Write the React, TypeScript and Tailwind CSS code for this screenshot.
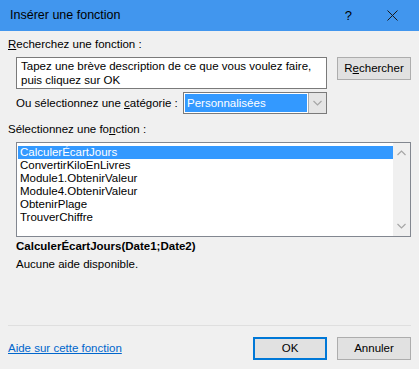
import React from "react";

const functions = [
  "CalculerÉcartJours",
  "ConvertirKiloEnLivres",
  "Module1.ObtenirValeur",
  "Module4.ObtenirValeur",
  "ObtenirPlage",
  "TrouverChiffre",
];

function Chevron({ up }: { up?: boolean }) {
  return (
    <svg width="9" height="6" viewBox="0 0 9 6">
      <path
        d={up ? "M0.5 5 L4.5 1 L8.5 5" : "M0.5 1 L4.5 5 L8.5 1"}
        fill="none"
        stroke="#a6a6a6"
        strokeWidth="1.2"
      />
    </svg>
  );
}

export default function App() {
  return (
    <div
      className="w-[419px] h-[369px] bg-[#f0f0f0] flex flex-col text-[11.5px] text-black overflow-hidden"
      style={{ fontFamily: '"Liberation Sans", Arial, sans-serif' }}
    >
      {/* barre de titre */}
      <div className="h-[31px] shrink-0 bg-[#4196ee] flex items-center pl-[10px]">
        <span className="leading-[15px] text-[12.5px]">Insérer une fonction</span>
        <span className="ml-auto mr-[35px] text-[13px]">?</span>
        <svg width="11" height="11" viewBox="0 0 11 11" className="mr-[21px]">
          <path d="M0.5 0.5 L10.5 10.5 M10.5 0.5 L0.5 10.5" stroke="#1a1a1a" strokeWidth="1" />
        </svg>
      </div>

      <div className="flex-1 flex flex-col px-[8px] pt-[6px] pb-[9px]">
        <div className="leading-[15px]">
          <span className="underline">R</span>echerchez une fonction :
        </div>

        <div className="flex items-start mt-[5px] ml-[8px]">
          <div className="w-[311px] h-[32px] bg-white border border-[#7a7a7a] px-[4px] pt-[1px] leading-[14px] whitespace-nowrap overflow-hidden">
            <div>Tapez une brève description de ce que vous voulez faire,</div>
            <div>puis cliquez sur OK</div>
          </div>
          <button className="ml-[10px] w-[74px] h-[23px] bg-[#e1e1e1] border border-[#adadad] leading-[15px]">
            R<span className="underline">e</span>chercher
          </button>
        </div>

        <div className="flex items-center mt-[3px] ml-[8px] h-[22px]">
          <span className="w-[167px] leading-[15px] whitespace-nowrap">
            Ou sélectionnez une <span className="underline">c</span>atégorie :
          </span>
          <div className="w-[144px] h-[22px] flex border border-[#7a7a7a] bg-white">
            <div className="flex-1 m-[1px] bg-[#3399ff] text-white pl-[2px] leading-[18px]">
              Personnalisées
            </div>
            <div className="w-[18px] bg-[#e5e5e5] border-l border-[#acacac] flex items-center justify-center">
              <Chevron />
            </div>
          </div>
        </div>

        <div className="leading-[15px] mt-[8px]">
          Sélectionnez une fo<span className="underline">n</span>ction :
        </div>

        <div className="mt-[5px] ml-[8px] w-[395px] h-[95px] bg-white border border-[#828790] flex">
          <div className="flex-1 pt-[3px] pl-[1px]">
            {functions.map((f, i) => (
              <div
                key={f}
                className={
                  i === 0
                    ? "h-[13px] leading-[13px] pl-[2px] bg-[#3399ff] text-white"
                    : "h-[13px] leading-[13px] pl-[2px]"
                }
              >
                {f}
              </div>
            ))}
          </div>
          <div className="w-[17px] bg-[#f0f0f0] flex flex-col items-center justify-between py-[7px]">
            <Chevron up />
            <Chevron />
          </div>
        </div>

        <div className="ml-[8px] mt-[2px] font-bold leading-[15px]">
          CalculerÉcartJours(Date1;Date2)
        </div>
        <div className="ml-[8px] mt-[3px] leading-[15px]">Aucune aide disponible.</div>

        <div className="mt-auto h-px bg-[#dfdfdf]" />

        <div className="flex items-center mt-[11px]">
          <a href="#" className="text-[#0066cc] underline leading-[15px]">
            Aide sur cette fonction
          </a>
          <button className="ml-auto w-[74px] h-[23px] bg-[#e1e1e1] border-2 border-[#0078d7]">
            OK
          </button>
          <button className="ml-[10px] w-[74px] h-[23px] bg-[#e1e1e1] border border-[#adadad]">
            Annuler
          </button>
        </div>
      </div>
    </div>
  );
}
